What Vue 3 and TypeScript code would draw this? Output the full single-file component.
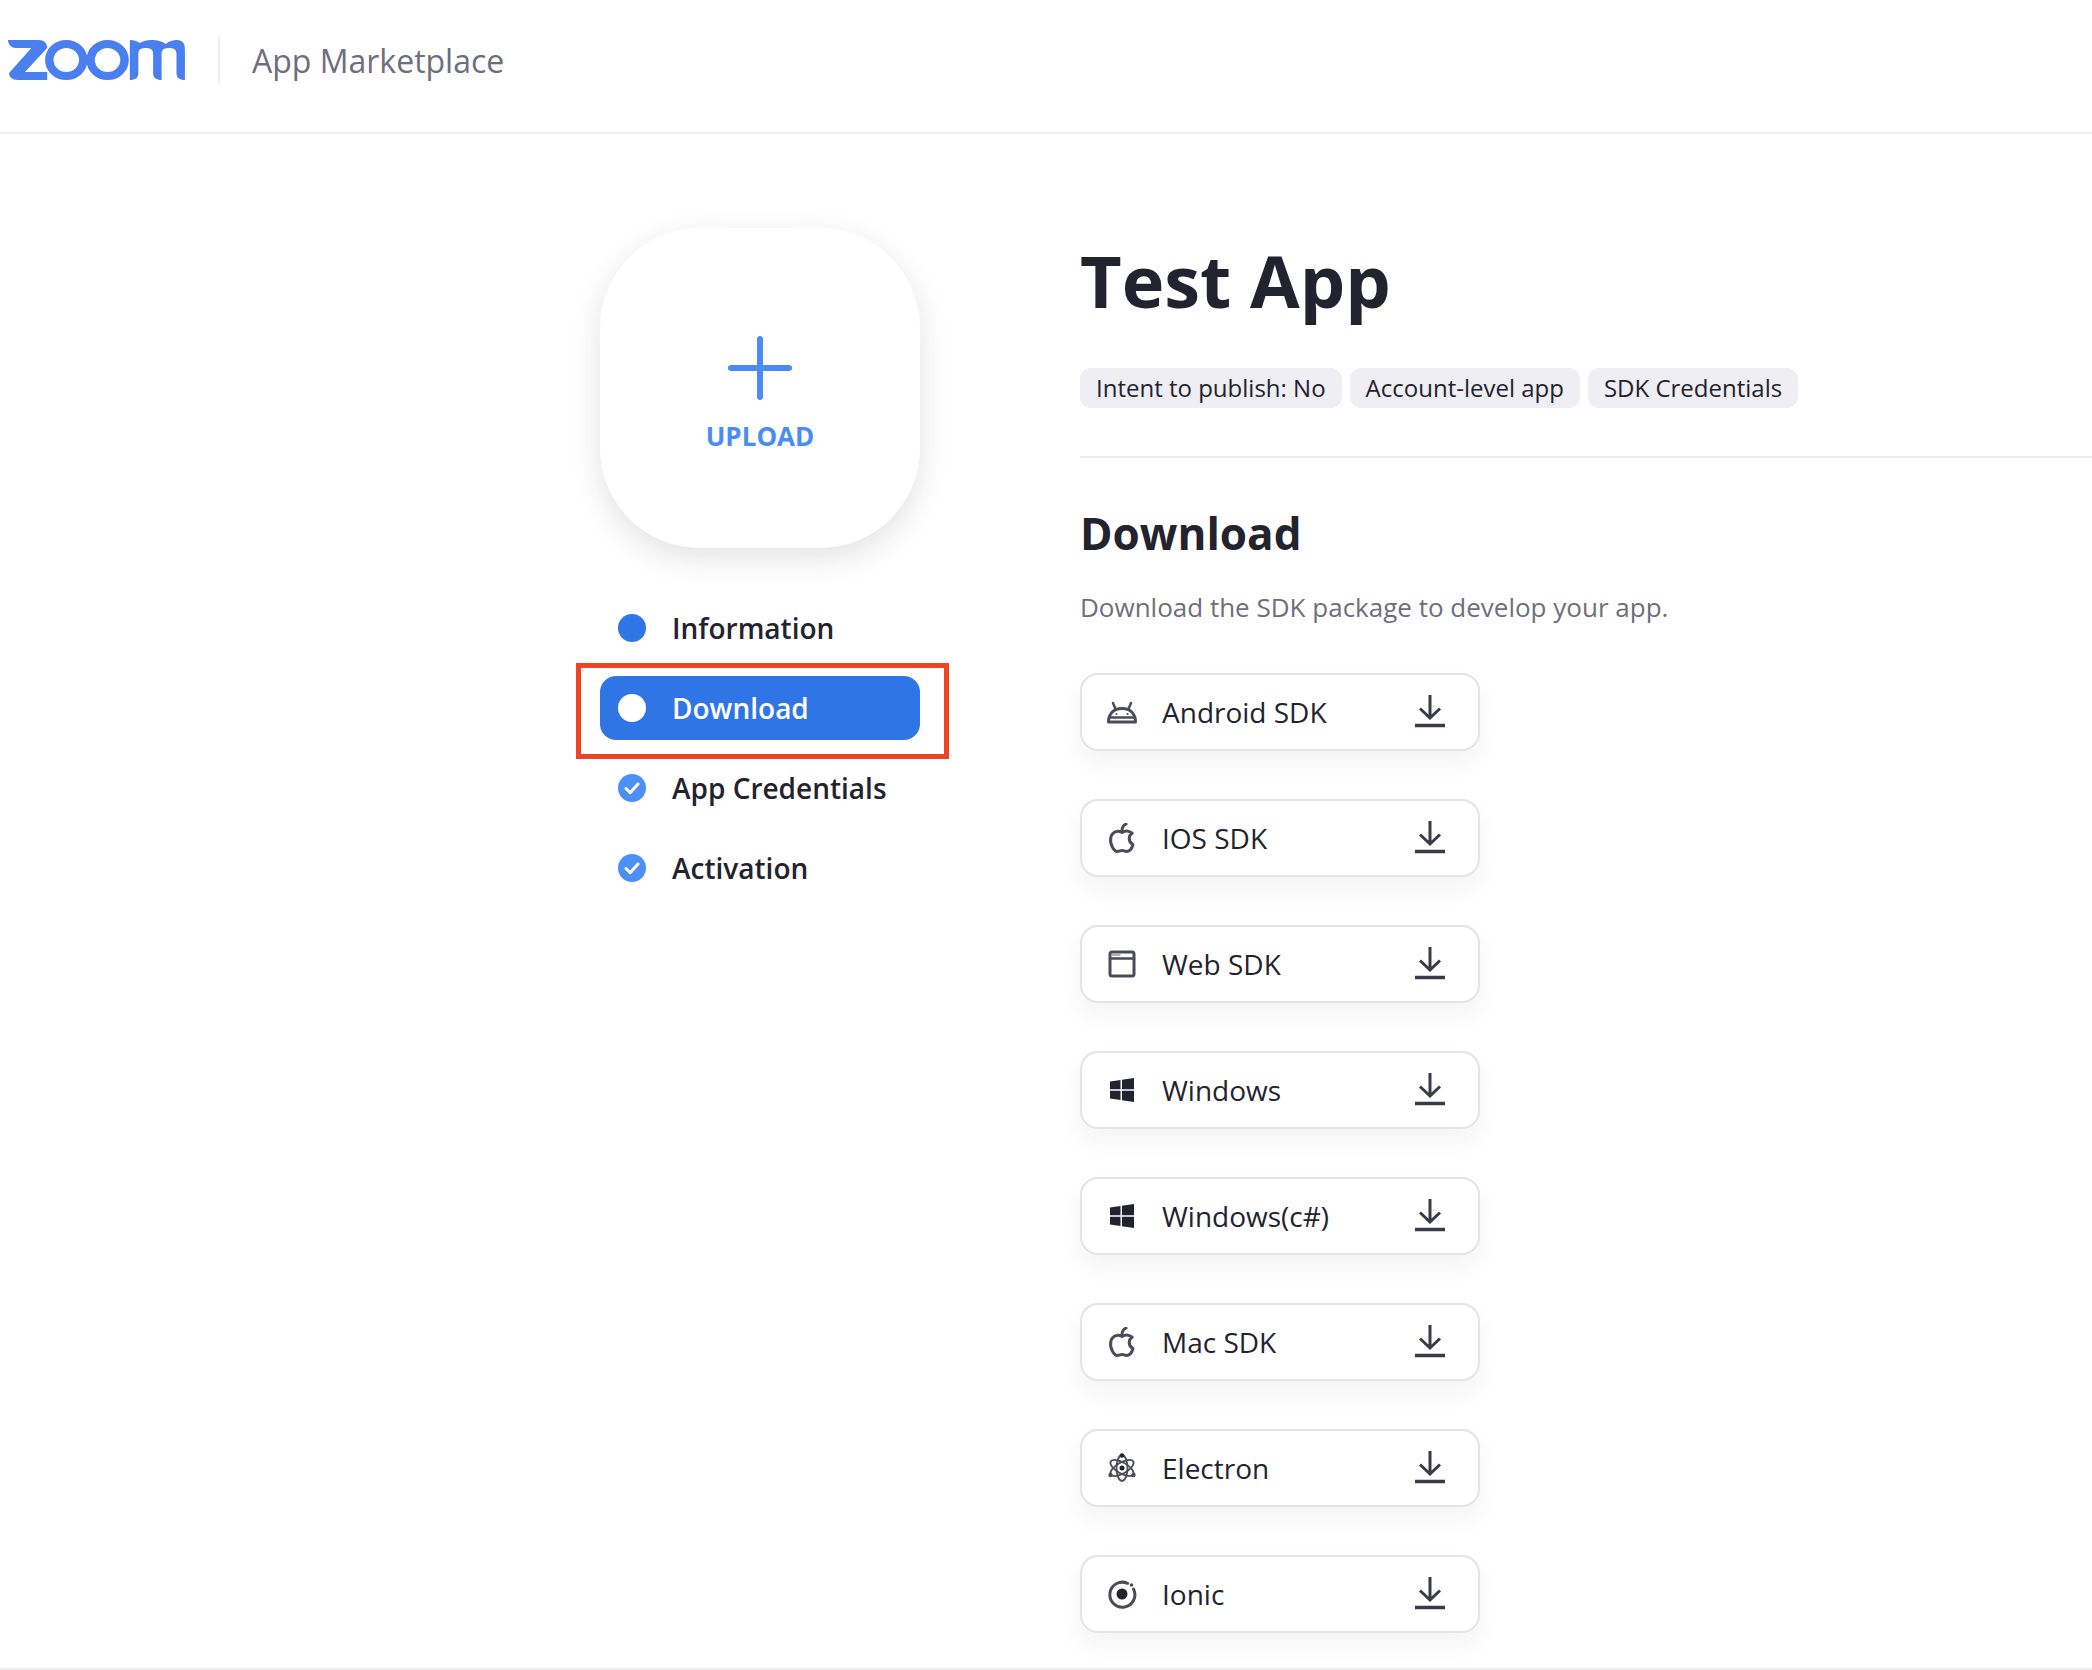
<template>
  <div class="page">
    <header class="topbar">
      <svg class="logo" viewBox="0 0 168 40" width="178" height="40" preserveAspectRatio="none" aria-label="zoom">
        <path class="logo-fill" d="M0 0h29c5 0 8 3 8 8L16 32h21v8H9c-5 0-8-3-8-7L22 8H7C3 8 0 4 0 0Z" />
        <circle class="logo-ring" cx="55" cy="20" r="16" />
        <circle class="logo-ring" cx="94" cy="20" r="16" />
        <path class="logo-fill" d="M115 0c4 0 7 1 9 3 4-2 7-3 11-3 6 0 10 1 14 4 3-3 7-4 10-4 8 0 8 6 8 12v28c-5 0-8-2-8-7V14c0-4-2-6-7-6s-7 2-7 6v19c0 4 0 7 0 7-5 0-8-2-8-7V14c0-4-2-6-7-6s-7 2-7 6v19c0 5-3 7-8 7V0Z" />
      </svg>
      <span class="topbar-sep" />
      <span class="topbar-title">App Marketplace</span>
    </header>

    <main class="content">
      <aside class="side">
        <div class="upload">
          <svg viewBox="0 0 64 64" width="64" height="64">
            <path d="M32 3v58M3 32h58" class="plus" />
          </svg>
          <span class="upload-label">UPLOAD</span>
        </div>
        <nav class="steps">
          <div
            v-for="step in steps"
            :key="step.label"
            class="step"
            :class="{ active: step.state === 'active' }"
          >
            <svg class="step-icon" viewBox="0 0 28 28" width="28" height="28">
              <circle v-if="step.state === 'active'" cx="14" cy="14" r="14" fill="#fff" />
              <circle v-else-if="step.state === 'todo'" cx="14" cy="14" r="14" fill="#3075e5" />
              <template v-else>
                <circle cx="14" cy="14" r="14" fill="#4d90f5" />
                <path d="M8 14.500l4.200 4.200L20 10" fill="none" stroke="#fff" stroke-width="3" stroke-linecap="round" stroke-linejoin="round" />
              </template>
            </svg>
            <span>{{ step.label }}</span>
            <span v-if="step.state === 'active'" class="callout" />
          </div>
        </nav>
      </aside>

      <section class="detail">
        <h1>Test App</h1>
        <div class="tags">
          <span v-for="tag in tags" :key="tag" class="tag">{{ tag }}</span>
        </div>
        <h2>Download</h2>
        <p class="lead">Download the SDK package to develop your app.</p>
        <div class="sdks">
          <div v-for="sdk in sdks" :key="sdk.name" class="sdk">
            <svg class="sdk-icon" viewBox="0 0 30 30" width="30" height="30">
              <g v-if="sdk.icon === 'android'" class="line">
                <path d="M1.500 25c0-8 5-13.500 13.500-13.500S28.500 17 28.500 25Z" stroke-width="3" />
                <path d="M8.500 12 6 6M21.500 12 24 6M2 20.500h26" />
                <circle cx="9.500" cy="17" r="1" fill="#4b4b59" stroke="none" />
                <circle cx="20.500" cy="17" r="1" fill="#4b4b59" stroke="none" />
              </g>
              <g v-else-if="sdk.icon === 'apple'" class="line bold">
                <path d="M15 9.500C12 7.500 5.500 7.500 3.800 14.500 2.500 21 7 28.500 10.500 28.500c2 0 2.800-1 4.500-1s2.500 1 4.500 1c3 0 5.500-3.500 6.500-7-4.800-2.200-5-9-.8-11.300C22 7.500 18 7.500 15 9.500Z" />
                <path d="M15 9c-.3-3.500 1-6.500 4-8" />
              </g>
              <g v-else-if="sdk.icon === 'web'" class="line">
                <rect x="3" y="3" width="24" height="24" rx="2" stroke-width="3" />
                <path d="M3 9.500h24" stroke-width="2.500" />
                <path d="M5 6h8" stroke-width="1.500" stroke="#9a9aa6" />
              </g>
              <g v-else-if="sdk.icon === 'windows'" fill="#23232f">
                <path d="M3 6.500 13.500 5v9.300H3ZM15 4.800 27 3v11.300H15ZM3 15.800h10.500V25L3 23.500ZM15 15.800h12V27l-12-1.800Z" />
              </g>
              <g v-else-if="sdk.icon === 'electron'" class="line thin">
                <ellipse cx="15" cy="15" rx="13" ry="5.500" transform="rotate(30 15 15)" />
                <ellipse cx="15" cy="15" rx="13" ry="5.500" transform="rotate(90 15 15)" />
                <ellipse cx="15" cy="15" rx="13" ry="5.500" transform="rotate(150 15 15)" />
                <circle cx="15" cy="15" r="2.500" fill="#23232f" stroke="none" />
                <circle cx="15" cy="2.500" r="2.200" fill="#23232f" stroke="none" />
                <circle cx="3.500" cy="22" r="2.200" fill="#4b4b59" stroke="none" />
                <circle cx="26.500" cy="22" r="2.200" fill="#4b4b59" stroke="none" />
              </g>
              <g v-else class="line">
                <path d="M20.500 4.300A12.500 12.500 0 1 0 26.500 10" stroke-width="3" />
                <circle cx="15" cy="15" r="5.500" fill="#23232f" stroke="none" />
                <circle cx="24.500" cy="6" r="1.800" fill="#4b4b59" stroke="none" />
              </g>
            </svg>
            <span class="sdk-name">{{ sdk.name }}</span>
            <svg class="sdk-get" viewBox="0 0 30 34" width="30" height="34">
              <path d="M15 0v23M5 13.500 15 23l10-9.500" />
              <path d="M0 30.500h30" class="sdk-get-bar" />
            </svg>
          </div>
        </div>
      </section>
    </main>
  </div>
</template>

<script setup lang="ts">
type StepState = 'todo' | 'active' | 'done'

const steps: { label: string; state: StepState }[] = [
  { label: 'Information', state: 'todo' },
  { label: 'Download', state: 'active' },
  { label: 'App Credentials', state: 'done' },
  { label: 'Activation', state: 'done' },
]

const tags = ['Intent to publish: No', 'Account-level app', 'SDK Credentials']

const sdks = [
  { name: 'Android SDK', icon: 'android' },
  { name: 'IOS SDK', icon: 'apple' },
  { name: 'Web SDK', icon: 'web' },
  { name: 'Windows', icon: 'windows' },
  { name: 'Windows(c#)', icon: 'windows' },
  { name: 'Mac SDK', icon: 'apple' },
  { name: 'Electron', icon: 'electron' },
  { name: 'Ionic', icon: 'ionic' },
]
</script>

<style scoped>
.page {
  height: 1670px;
  box-sizing: border-box;
  overflow: hidden;
  background: #fff;
  color: #23232f;
  font-family: "Open Sans", "Noto Sans", sans-serif;
}

.topbar {
  height: 134px;
  box-sizing: border-box;
  display: flex;
  align-items: center;
  padding: 0 0 12px 8px;
  border-bottom: 2px solid #ededf2;
}
.logo { flex: none; }
.logo-fill { fill: #4a7ff0; }
.logo-ring { fill: none; stroke: #4a7ff0; stroke-width: 8; }
.topbar-sep {
  width: 2px;
  height: 48px;
  margin: 0 32px 0 32px;
  background: #ededf2;
}
.topbar-title {
  font-size: 32px;
  color: #6e6e7e;
}

.content {
  display: flex;
  height: 1536px;
  box-sizing: border-box;
  padding-left: 600px;
  border-bottom: 2px solid #ededf2;
}

.side {
  width: 320px;
  flex: none;
  margin-right: 160px;
  padding-top: 94px;
}
.upload {
  width: 320px;
  height: 320px;
  box-sizing: border-box;
  padding-top: 108px;
  display: flex;
  flex-direction: column;
  align-items: center;
  gap: 18px;
  border-radius: 100px;
  background: #fff;
  box-shadow: 0 10px 30px rgba(35, 35, 51, 0.13);
}
.plus {
  fill: none;
  stroke: #4a8cf5;
  stroke-width: 6;
  stroke-linecap: round;
}
.upload-label {
  font-size: 26px;
  line-height: 36px;
  font-weight: 700;
  color: #4a8cf5;
}

.steps {
  margin-top: 48px;
  display: flex;
  flex-direction: column;
  gap: 16px;
}
.step {
  position: relative;
  height: 64px;
  display: flex;
  align-items: center;
  gap: 26px;
  padding-left: 18px;
  border-radius: 16px;
  font-size: 28px;
  font-weight: 600;
}
.step.active {
  background: #3075e5;
  color: #fff;
}
.step-icon { flex: none; }
.callout {
  position: absolute;
  left: -24px;
  right: -29px;
  top: -13px;
  bottom: -19px;
  border: 5px solid #ee4425;
}

.detail {
  flex: 1;
  min-width: 0;
}
h1 {
  margin: 0;
  padding-top: 108px;
  font-size: 72px;
  line-height: 76px;
  font-weight: 700;
}
.tags {
  display: flex;
  gap: 8px;
  margin-top: 50px;
  padding-bottom: 48px;
  border-bottom: 2px solid #ededf2;
}
.tag {
  height: 40px;
  padding: 0 16px 2px;
  box-sizing: border-box;
  display: flex;
  align-items: center;
  border-radius: 11px;
  background: #eeeef3;
  font-size: 24px;
}
h2 {
  margin: 47px 0 0;
  font-size: 44px;
  line-height: 56px;
  font-weight: 700;
}
.lead {
  margin: 28px 0 0;
  font-size: 26px;
  line-height: 36px;
  color: #6e6e7e;
}

.sdks {
  margin-top: 48px;
  width: 400px;
  display: flex;
  flex-direction: column;
  gap: 48px;
}
.sdk {
  height: 78px;
  box-sizing: border-box;
  display: flex;
  align-items: center;
  padding: 0 33px 0 25px;
  border: 2px solid #e3e3ea;
  border-radius: 18px;
  background: #fff;
  box-shadow: 0 12px 24px rgba(35, 35, 51, 0.05);
}
.sdk-icon { flex: none; }
.sdk-name {
  flex: 1;
  margin-left: 25px;
  font-size: 28px;
}
.sdk-get {
  flex: none;
  fill: none;
  stroke: #3a3a48;
  stroke-width: 3;
}
.sdk-get-bar { stroke-width: 3.500; }
.line {
  fill: none;
  stroke: #4b4b59;
  stroke-width: 2.500;
  stroke-linejoin: round;
  stroke-linecap: round;
}
.line.bold { stroke-width: 3; }
.line.thin { stroke-width: 1.800; }
</style>
